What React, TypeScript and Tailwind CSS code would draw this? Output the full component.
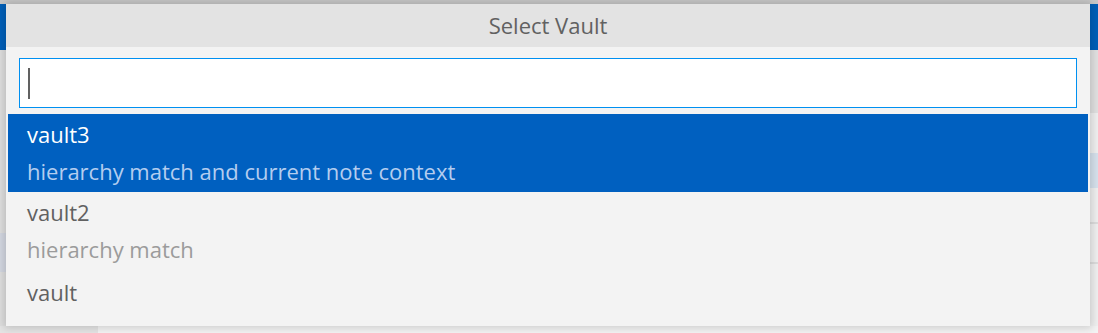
import React from 'react'

const font = { fontFamily: '"Segoe UI", "Open Sans", "Noto Sans", sans-serif' }

type Item = { label: string; detail?: string }

const items: Item[] = [
  { label: 'vault3', detail: 'hierarchy match and current note context' },
  { label: 'vault2', detail: 'hierarchy match' },
  { label: 'vault' },
]

function Backdrop() {
  // the editor window sitting behind the quick pick
  return (
    <div className="flex h-full w-full flex-col bg-[#f3f3f3]">
      <div className="h-[4px] w-full bg-[#c8c8c8]" />
      <div className="flex flex-1">
        <div className="flex w-[6px] flex-col">
          <div className="h-[46px] bg-[#005fb8]" />
          <div className="h-[183px] bg-[#dedede]" />
          <div className="h-[39px] bg-[#d3d7e1]" />
          <div className="flex-1 bg-[#dedede]" />
        </div>
        <div className="flex-1" />
        <div className="flex w-[8px] flex-col">
          <div className="h-[46px] bg-[#005fb8]" />
          <div className="h-[63px] bg-[#e0e0e0]" />
          <div className="h-[40px] bg-[#efefef]" />
          <div className="h-[35px] bg-[#d6e1ec]" />
          <div className="h-[34px] bg-[#efefef]" />
          <div className="h-[2px] bg-[#dcdcdc]" />
          <div className="h-[38px] bg-[#efefef]" />
          <div className="h-[2px] bg-[#dcdcdc]" />
          <div className="flex-1 bg-[#efefef]" />
        </div>
      </div>
      <div className="flex h-[7px]">
        <div className="w-[98px] bg-[#e4e4e4]" />
        <div className="flex-1 bg-[#f3f3f3]" />
      </div>
    </div>
  )
}

export default function App() {
  return (
    <div className="relative h-[333px] w-[1098px] overflow-hidden" style={font}>
      <Backdrop />

      {/* Quick pick */}
      <div className="absolute left-[6px] top-[4px] flex h-[322px] w-[1084px] flex-col bg-[#f3f3f3] shadow-[0_0_8px_2px_rgba(0,0,0,0.16)]">
        <div className="flex h-[43px] items-center justify-center bg-[#e3e3e3] text-[22px] text-[#616161]">
          Select Vault
        </div>

        <div className="px-[13px] pt-[11px]">
          <div className="flex h-[50px] items-center border border-[#0090f1] bg-white px-[8px]">
            <div className="h-[31px] w-[2px] bg-[#616161]" />
          </div>
        </div>

        <div className="mt-[6px] px-[2px]">
          {items.map((item, i) => {
            const active = i === 0
            return (
              <div
                key={item.label}
                className={
                  active
                    ? 'bg-[#0060c0] px-[19px] py-[2px]'
                    : item.detail
                      ? 'px-[19px] py-[2px]'
                      : 'px-[19px] pt-[4px] pb-[2px]'
                }
              >
                <div
                  className={
                    active
                      ? 'h-[37px] leading-[37px] text-[22px] text-white'
                      : 'h-[37px] leading-[37px] text-[22px] text-[#616161]'
                  }
                >
                  {item.label}
                </div>
                {item.detail && (
                  <div
                    className={
                      active
                        ? 'h-[37px] leading-[37px] text-[22px] text-[#b4cdef]'
                        : 'h-[37px] leading-[37px] text-[22px] text-[#9b9b9b]'
                    }
                  >
                    {item.detail}
                  </div>
                )}
              </div>
            )
          })}
        </div>
      </div>
    </div>
  )
}
